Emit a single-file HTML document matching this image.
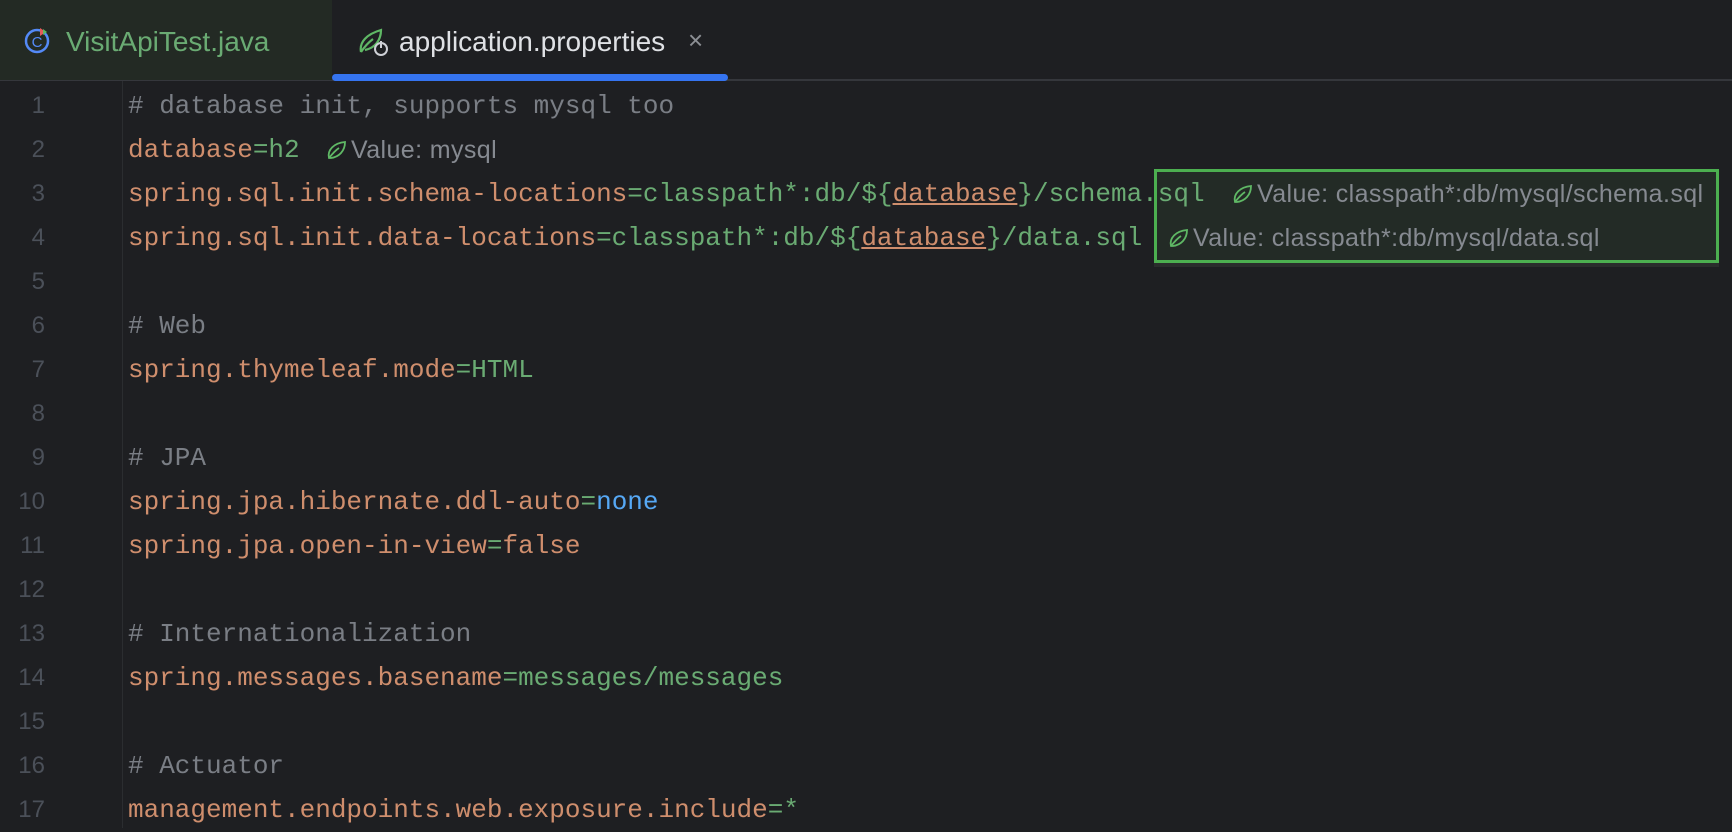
<!DOCTYPE html>
<html><head><meta charset="utf-8"><style>
*{margin:0;padding:0;box-sizing:border-box}
body{width:1732px;height:828px;background:#1e1f22;overflow:hidden;position:relative;font-family:"Liberation Sans",sans-serif}
.tabbar{position:absolute;left:0;top:0;width:1732px;height:81px;border-bottom:2px solid #35373c;background:#1e1f22}
.tab1{position:absolute;left:0;top:0;width:332px;height:80px;background:#232a24}
.t{position:absolute;font-size:28px;top:26px}
.ul{position:absolute;left:332px;top:74px;width:396px;height:7px;background:#3574f0;border-radius:4px}
.gut{position:absolute;left:122px;top:81px;width:1px;height:747px;background:#2b2d30}
.ln{position:absolute;left:0;width:45px;text-align:right;font-family:"Liberation Sans",sans-serif;font-size:24px;color:#4b5059;line-height:44px}
.code{position:absolute;left:128px;font-family:"Liberation Mono",monospace;font-size:26px;line-height:44px;white-space:pre;color:#cf8e6d}
.g{color:#6aab73}.c{color:#7a7e85}.b{color:#56a8f5}.u{text-decoration:underline}
.inl{position:absolute;font-size:25px;letter-spacing:0.4px;color:#868a91;line-height:44px;white-space:pre}
.box{position:absolute;left:1154px;top:169px;width:565px;height:94px;border:3px solid #4caf50;background:#232b26;box-shadow:0 4px 0 #2a2d2c}
.leaf{position:absolute;width:22px;height:22px}
</style></head><body>
<div class="tabbar"></div>
<div class="tab1"></div>
<svg style="position:absolute;left:24px;top:26px" width="28" height="28" viewBox="0 0 28 28"><circle cx="13" cy="15" r="11" fill="none" stroke="#548af7" stroke-width="2.5"/><text x="13" y="21" font-size="15" fill="#548af7" text-anchor="middle" font-family="Liberation Sans">C</text><path d="M16 2 L22 6 L16 10Z" fill="#e55b5b"/><path d="M19 3 L23 6 L19 9" fill="#5fb865"/></svg>
<div class="t" style="left:66px;color:#6aab73">VisitApiTest.java</div>
<svg style="position:absolute;left:357px;top:26px" width="34" height="32" viewBox="0 0 34 32"><path d="M4 26 C2 16 10 8 24 4 C24 14 18 22 8 24 M4 26 C8 20 12 16 16 13" fill="none" stroke="#5fb865" stroke-width="2.2"/><circle cx="24" cy="23" r="6" fill="none" stroke="#ced0d6" stroke-width="2"/><path d="M24 15v7" stroke="#ced0d6" stroke-width="2"/></svg>
<div class="t" style="left:399px;color:#dfe1e5">application.properties</div>
<div class="t" style="left:688px;color:#8c8f94;font-size:26px;top:25px">×</div>
<div class="ul"></div>
<div class="gut"></div>
<div class="box"></div>

<div class="ln" style="top:84px">1</div><div class="ln" style="top:128px">2</div><div class="ln" style="top:172px">3</div><div class="ln" style="top:216px">4</div><div class="ln" style="top:260px">5</div><div class="ln" style="top:304px">6</div><div class="ln" style="top:348px">7</div><div class="ln" style="top:392px">8</div><div class="ln" style="top:436px">9</div><div class="ln" style="top:480px">10</div><div class="ln" style="top:524px">11</div><div class="ln" style="top:568px">12</div><div class="ln" style="top:612px">13</div><div class="ln" style="top:656px">14</div><div class="ln" style="top:700px">15</div><div class="ln" style="top:744px">16</div><div class="ln" style="top:788px">17</div>

<div class="code c" style="top:84px"># database init, supports mysql too</div>
<div class="code" style="top:128px">database<span class="g">=h2</span></div>
<div class="code" style="top:172px">spring.sql.init.schema-locations<span class="g">=classpath*:db/${</span><span class="u">database</span><span class="g">}/schema.sql</span></div>
<div class="code" style="top:216px">spring.sql.init.data-locations<span class="g">=classpath*:db/${</span><span class="u">database</span><span class="g">}/data.sql</span></div>
<div class="code c" style="top:304px"># Web</div>
<div class="code" style="top:348px">spring.thymeleaf.mode<span class="g">=HTML</span></div>
<div class="code c" style="top:436px"># JPA</div>
<div class="code" style="top:480px">spring.jpa.hibernate.ddl-auto<span class="g">=</span><span class="b">none</span></div>
<div class="code" style="top:524px">spring.jpa.open-in-view<span class="g">=</span>false</div>
<div class="code c" style="top:612px"># Internationalization</div>
<div class="code" style="top:656px">spring.messages.basename<span class="g">=messages/messages</span></div>
<div class="code c" style="top:744px"># Actuator</div>
<div class="code" style="top:788px">management.endpoints.web.exposure.include<span class="g">=*</span></div>

<svg class="leaf" style="left:326px;top:139px" viewBox="0 0 22 22"><path d="M3 19 C1 11 8 4 19 3 C19 12 13 18 5 19Z M3 19 C7 14 10 11 13 9" fill="none" stroke="#5fb865" stroke-width="1.8"/></svg>
<div class="inl" style="left:351px;top:128px">Value: mysql</div>
<svg class="leaf" style="left:1232px;top:183px" viewBox="0 0 22 22"><path d="M3 19 C1 11 8 4 19 3 C19 12 13 18 5 19Z M3 19 C7 14 10 11 13 9" fill="none" stroke="#5fb865" stroke-width="1.8"/></svg>
<div class="inl" style="left:1257px;top:172px">Value: classpath*:db/mysql/schema.sql</div>
<svg class="leaf" style="left:1168px;top:227px" viewBox="0 0 22 22"><path d="M3 19 C1 11 8 4 19 3 C19 12 13 18 5 19Z M3 19 C7 14 10 11 13 9" fill="none" stroke="#5fb865" stroke-width="1.8"/></svg>
<div class="inl" style="left:1193px;top:216px">Value: classpath*:db/mysql/data.sql</div>
</body></html>
